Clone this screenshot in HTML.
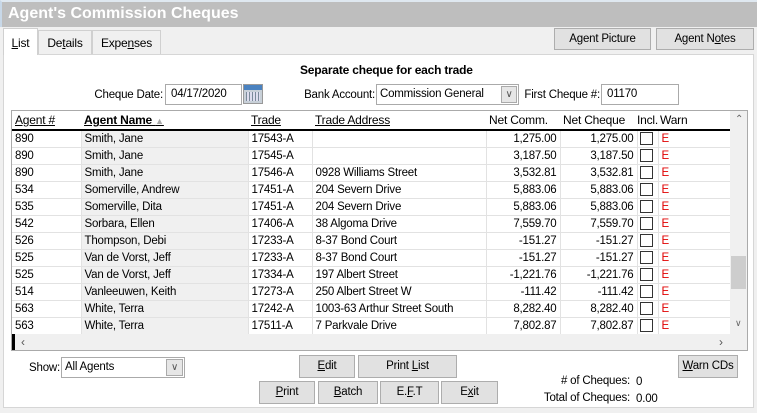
<!DOCTYPE html>
<html><head><style>
*{box-sizing:border-box;margin:0;padding:0}
body{width:757px;height:413px;background:#f0f0f0;font-family:"Liberation Sans",Arial,sans-serif;font-size:11.5px;letter-spacing:-0.2px;color:#000;position:relative;overflow:hidden}
.a{position:absolute}
.title{left:0;top:0;width:757px;height:27px;background:#bebebe;border-left:2px solid #c8d8e8;border-top:2px solid #dfe8f0;color:#fff;font-weight:bold;font-size:16px;letter-spacing:0;padding:3px 0 0 6px}
.tab{border:1px solid #d0d0d0;border-bottom:none;background:#f0f0f0;font-size:12px;padding-top:7px;text-align:center}
.panel{left:3px;top:54px;width:751px;height:354px;background:#fff;border:1px solid #d6d6d6}
.btn{background:#e1e1e1;border:1px solid #adadad;text-align:center;line-height:20px}
.inp{background:#fff;border:1px solid #aaa;padding-left:5px;line-height:19px}
.lbl{text-align:right}
.grid{left:11px;top:110px;width:737px;height:241px;border:1px solid #aaa;background:#fff;overflow:hidden}
table{border-collapse:collapse;position:absolute;left:0;top:0;table-layout:fixed}
td,th{height:17px;padding:0 3px;font-weight:normal;white-space:nowrap;overflow:hidden;border-right:1px solid #e2e2e2;border-bottom:1px solid #e2e2e2}
th{height:19px;border-bottom:2px solid #000;border-right:none;text-align:left;text-decoration:underline;font-size:12px}
td.n{background:#f0f0f0}
td.r{text-align:right}
.cb{display:inline-block;width:13px;height:13px;border:1px solid #333;vertical-align:middle}
.e{color:#e00000}
</style></head><body>
<div class="a title">Agent's Commission Cheques</div>
<div class="a tab" style="left:3px;top:28px;width:35px;height:27px;background:#fff;border-color:#d0d0d0;z-index:2"><u>L</u>ist</div>
<div class="a tab" style="left:38px;top:30px;width:54px;height:24px;padding-top:5px">De<u>t</u>ails</div>
<div class="a tab" style="left:92px;top:30px;width:69px;height:24px;padding-top:5px">Expe<u>n</u>ses</div>
<div class="a btn" style="left:554px;top:28px;width:97px;height:22px">A<u>g</u>ent Picture</div>
<div class="a btn" style="left:656px;top:28px;width:98px;height:22px">Agent N<u>o</u>tes</div>
<div class="a panel"></div>
<div class="a" style="left:300px;top:63px;font-weight:bold;font-size:12px">Separate cheque for each trade</div>
<div class="a lbl" style="left:60px;width:103px;top:89px">Cheque Date:</div>
<div class="a inp" style="left:165px;top:84px;width:77px;height:21px">04/17/2020</div>
<div class="a" style="left:243px;top:84px;width:20px;height:20px;background:#c8d0d8;border:1px solid #999">
 <div style="height:5px;background:#4a82c0"></div>
 <div style="margin:2px;height:9px;background:repeating-linear-gradient(90deg,#7a8a9a 0 1px,#dde 1px 3px)"></div></div>
<div class="a lbl" style="left:280px;width:95px;top:89px">Bank Account:</div>
<div class="a inp" style="left:376px;top:84px;width:143px;height:21px;padding-left:3px">Commission General</div>
<div class="a" style="left:501px;top:86px;width:16px;height:17px;background:#e6e6e6;border:1px solid #aaa;text-align:center;font-size:10px;line-height:15px;color:#555">&#8744;</div>
<div class="a lbl" style="left:500px;width:100px;top:89px">First Cheque #:</div>
<div class="a inp" style="left:601px;top:84px;width:78px;height:21px">01170</div>
<div class="a grid">
<table>
<colgroup><col style="width:69px"><col style="width:167px"><col style="width:64px"><col style="width:174px"><col style="width:74px"><col style="width:77px"><col style="width:19px"><col style="width:75px"></colgroup>
<tr><th>Agent #</th><th style="font-weight:bold">Agent Name <span style="color:#aaa;text-decoration:none;font-size:9px">&#9650;</span></th><th>Trade</th><th>Trade Address</th><th style="text-decoration:none">Net Comm.</th><th style="text-decoration:none">Net Cheque</th><th style="text-decoration:none;padding:0">Incl.</th><th style="text-decoration:none;padding-left:2px">Warn</th></tr>
<tr><td>890</td><td class="n">Smith, Jane</td><td>17543-A</td><td></td><td class="r">1,275.00</td><td class="r">1,275.00</td><td style="padding:0 2px"><span class="cb"></span></td><td class="e">E</td></tr>
<tr><td>890</td><td class="n">Smith, Jane</td><td>17545-A</td><td></td><td class="r">3,187.50</td><td class="r">3,187.50</td><td style="padding:0 2px"><span class="cb"></span></td><td class="e">E</td></tr>
<tr><td>890</td><td class="n">Smith, Jane</td><td>17546-A</td><td>0928 Williams Street</td><td class="r">3,532.81</td><td class="r">3,532.81</td><td style="padding:0 2px"><span class="cb"></span></td><td class="e">E</td></tr>
<tr><td>534</td><td class="n">Somerville, Andrew</td><td>17451-A</td><td>204 Severn Drive</td><td class="r">5,883.06</td><td class="r">5,883.06</td><td style="padding:0 2px"><span class="cb"></span></td><td class="e">E</td></tr>
<tr><td>535</td><td class="n">Somerville, Dita</td><td>17451-A</td><td>204 Severn Drive</td><td class="r">5,883.06</td><td class="r">5,883.06</td><td style="padding:0 2px"><span class="cb"></span></td><td class="e">E</td></tr>
<tr><td>542</td><td class="n">Sorbara, Ellen</td><td>17406-A</td><td>38 Algoma Drive</td><td class="r">7,559.70</td><td class="r">7,559.70</td><td style="padding:0 2px"><span class="cb"></span></td><td class="e">E</td></tr>
<tr><td>526</td><td class="n">Thompson, Debi</td><td>17233-A</td><td>8-37 Bond Court</td><td class="r">-151.27</td><td class="r">-151.27</td><td style="padding:0 2px"><span class="cb"></span></td><td class="e">E</td></tr>
<tr><td>525</td><td class="n">Van de Vorst, Jeff</td><td>17233-A</td><td>8-37 Bond Court</td><td class="r">-151.27</td><td class="r">-151.27</td><td style="padding:0 2px"><span class="cb"></span></td><td class="e">E</td></tr>
<tr><td>525</td><td class="n">Van de Vorst, Jeff</td><td>17334-A</td><td>197 Albert Street</td><td class="r">-1,221.76</td><td class="r">-1,221.76</td><td style="padding:0 2px"><span class="cb"></span></td><td class="e">E</td></tr>
<tr><td>514</td><td class="n">Vanleeuwen, Keith</td><td>17273-A</td><td>250 Albert Street W</td><td class="r">-111.42</td><td class="r">-111.42</td><td style="padding:0 2px"><span class="cb"></span></td><td class="e">E</td></tr>
<tr><td>563</td><td class="n">White, Terra</td><td>17242-A</td><td>1003-63 Arthur Street South</td><td class="r">8,282.40</td><td class="r">8,282.40</td><td style="padding:0 2px"><span class="cb"></span></td><td class="e">E</td></tr>
<tr><td>563</td><td class="n">White, Terra</td><td>17511-A</td><td>7 Parkvale Drive</td><td class="r">7,802.87</td><td class="r">7,802.87</td><td style="padding:0 2px"><span class="cb"></span></td><td class="e">E</td></tr>
</table>
<div class="a" style="left:718px;top:0;width:18px;height:223px;background:#f0f0f0">
 <div class="a" style="left:5px;top:3px;color:#666;font-size:10px">&#8963;</div>
 <div class="a" style="left:1px;top:145px;width:15px;height:33px;background:#cdcdcd"></div>
 <div class="a" style="left:5px;top:207px;color:#666;font-size:9px">&#8744;</div>
</div>
<div class="a" style="left:0;top:223px;width:736px;height:17px;background:#f0f0f0">
 <div class="a" style="left:0;top:0;width:3px;height:17px;background:#000"></div>
 <div class="a" style="left:9px;top:1px;color:#555;font-size:12px">&lsaquo;</div>
 <div class="a" style="left:707px;top:1px;color:#555;font-size:12px">&rsaquo;</div>
</div>
</div>
<div class="a lbl" style="left:10px;width:50px;top:362px">Show:</div>
<div class="a inp" style="left:61px;top:357px;width:124px;height:21px;padding-left:3px">All Agents</div>
<div class="a" style="left:166px;top:359px;width:17px;height:17px;background:#e6e6e6;border:1px solid #aaa;text-align:center;font-size:10px;line-height:15px;color:#555">&#8744;</div>
<div class="a btn" style="left:299px;top:355px;width:56px;height:23px"><u>E</u>dit</div>
<div class="a btn" style="left:358px;top:355px;width:99px;height:23px">Print <u>L</u>ist</div>
<div class="a btn" style="left:678px;top:355px;width:60px;height:23px"><u>W</u>arn CDs</div>
<div class="a btn" style="left:259px;top:381px;width:56px;height:23px"><u>P</u>rint</div>
<div class="a btn" style="left:318px;top:381px;width:60px;height:23px"><u>B</u>atch</div>
<div class="a btn" style="left:380px;top:381px;width:59px;height:23px">E.<u>F</u>.T</div>
<div class="a btn" style="left:441px;top:381px;width:57px;height:23px">E<u>x</u>it</div>
<div class="a lbl" style="left:530px;width:100px;top:375px">#&nbsp;of Cheques:</div>
<div class="a" style="left:636px;top:376px">0</div>
<div class="a lbl" style="left:520px;width:110px;top:392px">Total of Cheques:</div>
<div class="a" style="left:636px;top:393px">0.00</div>
</body></html>
